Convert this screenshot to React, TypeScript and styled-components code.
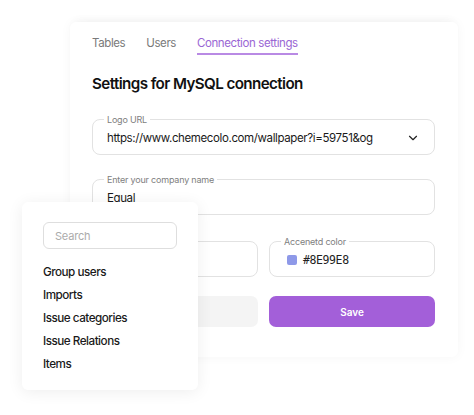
import { ChevronDown } from "lucide-react";
import styled, { createGlobalStyle } from "styled-components";

const GlobalStyle = createGlobalStyle`
  body {
    margin: 0;
    background: #fff;
    font-family: Inter, "Noto Sans", sans-serif;
    color: #1d1d1f;
  }
`;

const Stage = styled.div`
  position: relative;
  width: 474px;
  height: 415px;
  padding: 22px 16px 0 70px;
  box-sizing: border-box;
  overflow: hidden;
`;

const Card = styled.div`
  width: 388px;
  height: 335px;
  box-sizing: border-box;
  padding: 13px 23px 0 22px;
  background: #fff;
  border-radius: 6px;
  box-shadow: 0 -6px 10px -6px rgba(0, 0, 0, 0.05), 0 0 12px rgba(0, 0, 0, 0.04);
`;

const Tabs = styled.div`
  display: flex;
  gap: 21px;
`;

const Tab = styled.div<{ $active?: boolean }>`
  font-size: 11.5px;
  line-height: 16px;
  letter-spacing: -0.4px;
  padding-bottom: 2px;
  color: ${(p) => (p.$active ? "#9a66d4" : "#7a7a7a")};
  border-bottom: 2px solid ${(p) => (p.$active ? "#b98ae4" : "transparent")};
`;

const Heading = styled.h2`
  margin: 18px 0 0;
  font-size: 15.2px;
  line-height: 22px;
  font-weight: 600;
  letter-spacing: -0.6px;
  color: #111;
`;

const Field = styled.div<{ $mt: number }>`
  position: relative;
  margin-top: ${(p) => p.$mt}px;
  height: 36px;
  box-sizing: border-box;
  border: 1px solid #e2e2e2;
  border-radius: 8px;
  display: flex;
  align-items: center;
  padding: 2px 14px 0 14px;
  font-size: 11.5px;
  letter-spacing: -0.38px;
  color: #1a1a1a;
`;

const Label = styled.span`
  position: absolute;
  top: -6px;
  left: 11px;
  padding: 0 3px;
  background: #fff;
  font-size: 9px;
  line-height: 11px;
  letter-spacing: -0.2px;
  color: #808080;
`;

const Value = styled.span`
  flex: 1;
  white-space: nowrap;
  overflow: hidden;
`;

const Row = styled.div<{ $mt: number }>`
  display: grid;
  grid-template-columns: 1fr 1fr;
  gap: 11px;
  margin-top: ${(p) => p.$mt}px;
  & > ${Field} {
    margin-top: 0;
  }
`;

const Swatch = styled.span<{ $color: string }>`
  width: 10px;
  height: 10px;
  border-radius: 2px;
  background: ${(p) => p.$color};
  margin: 0 6px 0 3px;
`;

const Mono = styled.span`
  font-family: "DejaVu Sans Mono", "Liberation Mono", monospace;
  font-size: 11.5px;
  letter-spacing: -0.4px;
  color: #222;
`;

const Button = styled.button<{ $primary?: boolean }>`
  height: 31px;
  border: none;
  border-radius: 7px;
  font-family: inherit;
  font-size: 10px;
  font-weight: 600;
  color: ${(p) => (p.$primary ? "#fff" : "#999")};
  background: ${(p) => (p.$primary ? "#a35fd9" : "#f4f4f4")};
`;

const Menu = styled.div`
  position: absolute;
  left: 22px;
  top: 202px;
  width: 176px;
  height: 188px;
  box-sizing: border-box;
  padding: 20px 21px 0;
  background: #fff;
  border-radius: 6px;
  box-shadow: 0 2px 16px rgba(0, 0, 0, 0.07);
`;

const Search = styled.div`
  height: 27px;
  box-sizing: border-box;
  border: 1px solid #dedede;
  border-radius: 6px;
  padding: 0 11px;
  display: flex;
  align-items: center;
  font-size: 11px;
  color: #ababab;
  letter-spacing: -0.2px;
`;

const MenuList = styled.ul`
  list-style: none;
  margin: 15px 0 0;
  padding: 0;
  display: flex;
  flex-direction: column;
  gap: 7px;
`;

const MenuItem = styled.li`
  font-size: 11.7px;
  line-height: 16px;
  font-weight: 500;
  letter-spacing: -0.5px;
  color: #1a1a1a;
`;

const items = ["Group users", "Imports", "Issue categories", "Issue Relations", "Items"];

export default function App() {
  return (
    <>
      <GlobalStyle />
      <Stage>
        <Card>
          <Tabs>
            <Tab>Tables</Tab>
            <Tab>Users</Tab>
            <Tab $active>Connection settings</Tab>
          </Tabs>
          <Heading>Settings for MySQL connection</Heading>
          <Field $mt={24}>
            <Label>Logo URL</Label>
            <Value>https://www.chemecolo.com/wallpaper?i=59751&amp;og</Value>
            <ChevronDown size={14} strokeWidth={2} color="#222" />
          </Field>
          <Field $mt={24}>
            <Label>Enter your company name</Label>
            <Value>Equal</Value>
          </Field>
          <Row $mt={26}>
            <Field $mt={0}>
              <Label>Font</Label>
              <Value>Inter</Value>
            </Field>
            <Field $mt={0}>
              <Label>Accenetd color</Label>
              <Swatch $color="#8E99E8" />
              <Mono>#8E99E8</Mono>
            </Field>
          </Row>
          <Row $mt={19}>
            <Button>Cancel</Button>
            <Button $primary>Save</Button>
          </Row>
        </Card>
        <Menu>
          <Search>Search</Search>
          <MenuList>
            {items.map((item) => (
              <MenuItem key={item}>{item}</MenuItem>
            ))}
          </MenuList>
        </Menu>
      </Stage>
    </>
  );
}
